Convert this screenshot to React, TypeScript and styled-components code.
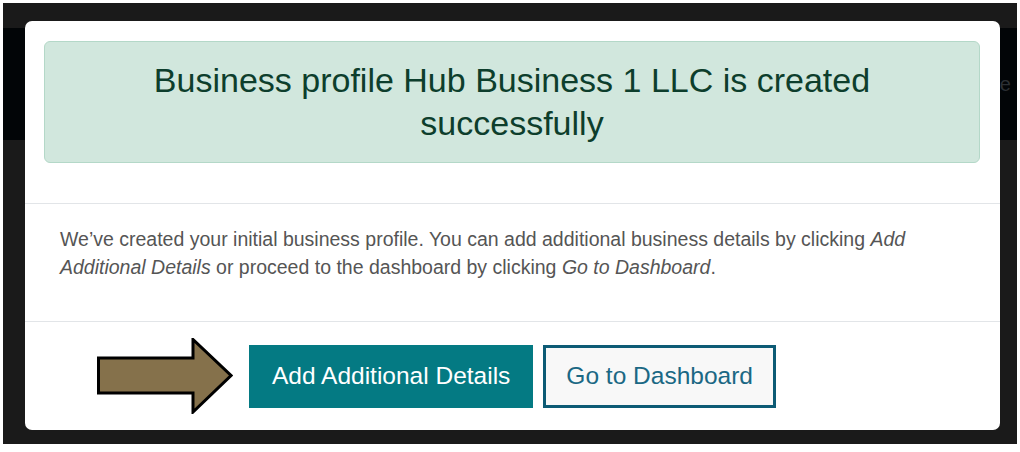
import styled, { createGlobalStyle } from 'styled-components';

const GlobalStyle = createGlobalStyle`
  html, body {
    margin: 0;
    padding: 0;
    background: #ffffff;
  }
  body {
    font-family: "Liberation Sans", Arial, sans-serif;
  }
`;

const Frame = styled.div`
  position: relative;
  margin: 3px;
  width: 1014px;
  height: 441px;
  background: #1a1a1a;
  overflow: hidden;
`;

const PageNav = styled.div`
  margin-top: 25px;
  height: 112px;
  background: #020507;
  display: flex;
  align-items: center;
  justify-content: flex-end;
  padding-right: 6px;
`;

const NavLink = styled.span`
  font-size: 20px;
  color: #2b2f33;
`;

const Modal = styled.div`
  position: absolute;
  left: 22px;
  top: 18px;
  width: 975px;
  height: 409px;
  background: #ffffff;
  border-radius: 7px;
  display: flex;
  flex-direction: column;
`;

const Header = styled.div`
  padding: 20px 20px 40px 19px;
  border-bottom: 1px solid #e2e5e8;
`;

const Alert = styled.div`
  height: 122px;
  box-sizing: border-box;
  background: #d1e7dd;
  border: 1px solid #b4d8c8;
  border-radius: 6px;
  display: flex;
  align-items: center;
  justify-content: center;
  text-align: center;
  padding: 0 60px;
  font-size: 34px;
  line-height: 43px;
  color: #0d3e2c;
`;

const Body = styled.div`
  padding: 21px 58px 0 35px;
  height: 118px;
  box-sizing: border-box;
  border-bottom: 1px solid #e2e5e8;
  font-size: 19.5px;
  line-height: 28px;
  color: #555555;
`;

const Footer = styled.div`
  display: flex;
  align-items: center;
  padding: 16px 0 0 72px;
`;

const Arrow = styled.svg`
  width: 136px;
  height: 76px;
  margin-right: 16px;
  flex-shrink: 0;
`;

const Button = styled.button<{ $primary?: boolean }>`
  height: 63px;
  box-sizing: border-box;
  font-family: "Liberation Sans", Arial, sans-serif;
  font-size: 24.5px;
  padding: 0 20px;
  margin-right: 10px;
  border: 3px solid ${({ $primary }) => ($primary ? '#047a83' : '#0d5b75')};
  background: ${({ $primary }) => ($primary ? '#047a83' : '#f8f8f8')};
  color: ${({ $primary }) => ($primary ? '#ffffff' : '#1b6884')};
  cursor: pointer;
`;

export default function App() {
  return (
    <>
      <GlobalStyle />
      <Frame>
        <PageNav>
          <NavLink>Home</NavLink>
        </PageNav>
        <Modal>
          <Header>
            <Alert>Business profile Hub Business 1 LLC is created successfully</Alert>
          </Header>
          <Body>
            We’ve created your initial business profile. You can add additional business details by clicking{' '}
            <em>Add Additional Details</em> or proceed to the dashboard by clicking <em>Go to Dashboard</em>.
          </Body>
          <Footer>
            <Arrow viewBox="0 0 136 76">
              <polygon
                points="1.5,20 96,20 96,1.5 134,37.5 96,74 96,55 1.5,55"
                fill="#85714b"
                stroke="#000000"
                strokeWidth="3"
                strokeLinejoin="miter"
              />
            </Arrow>
            <Button $primary>Add Additional Details</Button>
            <Button>Go to Dashboard</Button>
          </Footer>
        </Modal>
      </Frame>
    </>
  );
}
